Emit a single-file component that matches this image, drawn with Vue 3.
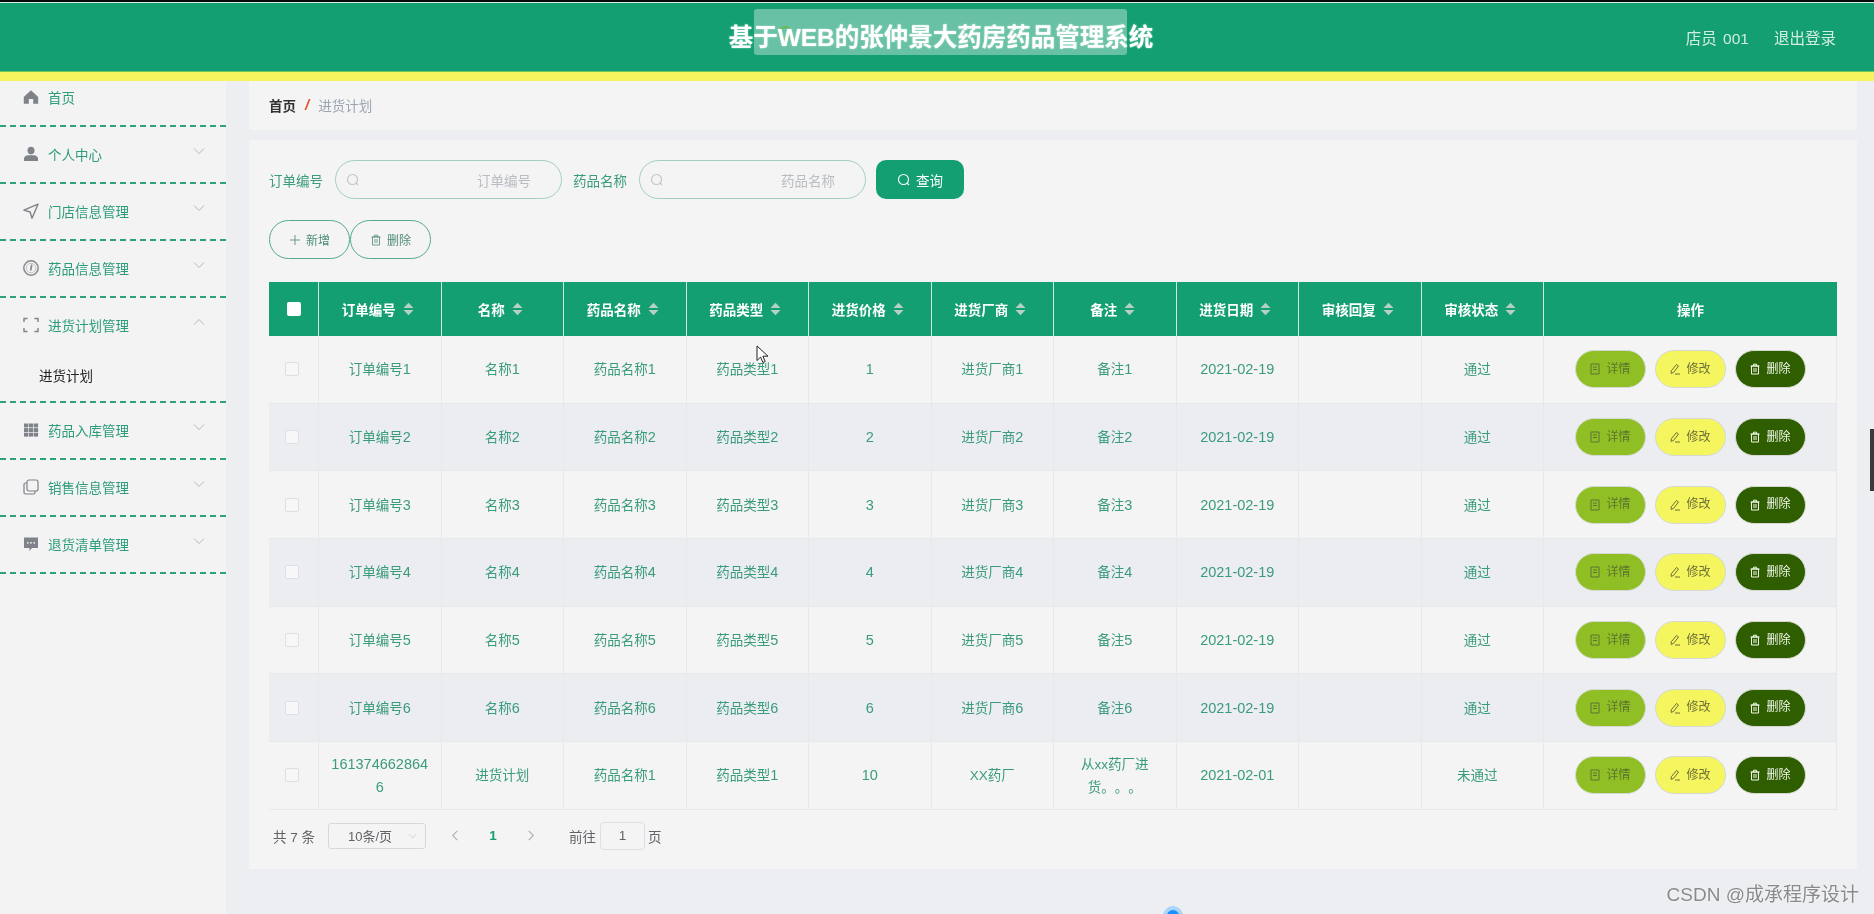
<script setup>
const sideItems = [
  { label: '首页', icon: 'home' },
  { label: '个人中心', icon: 'user', arrow: true },
  { label: '门店信息管理', icon: 'send', arrow: true },
  { label: '药品信息管理', icon: 'gauge', arrow: true },
  { label: '进货计划管理', icon: 'full', arrow: true, open: true, sub: '进货计划' },
  { label: '药品入库管理', icon: 'grid', arrow: true },
  { label: '销售信息管理', icon: 'copy', arrow: true },
  { label: '退货清单管理', icon: 'chat', arrow: true },
]
const columns = ['订单编号', '名称', '药品名称', '药品类型', '进货价格', '进货厂商', '备注', '进货日期', '审核回复', '审核状态']
const rows = [1, 2, 3, 4, 5, 6].map((n) => [
  `订单编号${n}`, `名称${n}`, `药品名称${n}`, `药品类型${n}`, `${n}`, `进货厂商${n}`, `备注${n}`, '2021-02-19', '', '通过',
])
rows.push(['1613746628646', '进货计划', '药品名称1', '药品类型1', '10', 'XX药厂', '从xx药厂进货。。。', '2021-02-01', '', '未通过'])
const split = (v) => {
  const m = v.match(/^(.*?)([0-9-]*)$/)
  return [m[1], m[2]]
}
</script>

<template>
  <div class="page">
    <header class="top">
      <div class="logo-box"><span class="logo-ring"></span></div>
      <h1 class="title">基于WEB的张仲景大药房药品管理系统</h1>
      <div class="user">
        <span class="clerk">店员 001</span>
        <span>退出登录</span>
      </div>
    </header>
    <div class="body">
      <aside class="side">
        <div class="menu">
          <div v-for="item in sideItems" :key="item.label" class="group">
            <div class="item">
              <svg class="ico" viewBox="0 0 16 16">
                <path v-if="item.icon === 'home'" fill="#7f8288" d="M8 1.200.8 8v6.800h5V10h4.400v4.800h5V8z" />
                <g v-else-if="item.icon === 'user'" fill="#7f8288">
                  <ellipse cx="8" cy="4.600" rx="3.500" ry="3.800" />
                  <path d="M1 15v-2.500c0-2 2-3.300 4-3.300h6c2 0 4 1.300 4 3.300V15z" />
                </g>
                <path v-else-if="item.icon === 'send'" fill="none" stroke="#7f8288" stroke-width="1.400" stroke-linejoin="round" d="M15 1.200.9 7.200l6.200 1.800 1.900 6.200z" />
                <g v-else-if="item.icon === 'gauge'" fill="none" stroke="#85888d">
                  <circle cx="8" cy="8" r="7.200" stroke-width="1.500" />
                  <circle cx="8" cy="8" r="4.800" stroke-width=".8" stroke="#b5b5b5" />
                  <path d="M8.800 4.500 7.600 10.500" stroke-width="1.700" />
                </g>
                <path v-else-if="item.icon === 'full'" fill="none" stroke="#7f8288" stroke-width="1.400" d="M1 5V1.500h3.500M11.500 1.500H15V5M15 11v3.500h-3.500M4.500 14.500H1V11" />
                <g v-else-if="item.icon === 'grid'" fill="#7f8288">
                  <rect x="1" y="1.500" width="4.300" height="3.900" /><rect x="5.900" y="1.500" width="4.300" height="3.900" /><rect x="10.800" y="1.500" width="4.300" height="3.900" />
                  <rect x="1" y="6.100" width="4.300" height="3.900" /><rect x="5.900" y="6.100" width="4.300" height="3.900" /><rect x="10.800" y="6.100" width="4.300" height="3.900" />
                  <rect x="1" y="10.700" width="4.300" height="3.900" /><rect x="5.900" y="10.700" width="4.300" height="3.900" /><rect x="10.800" y="10.700" width="4.300" height="3.900" />
                </g>
                <g v-else-if="item.icon === 'copy'" fill="none" stroke="#7f8288" stroke-width="1.200">
                  <rect x="4" y="1" width="11" height="11" rx="2" />
                  <path d="M4 4H2.500A1.500 1.500 0 0 0 1 5.500v8A1.500 1.500 0 0 0 2.500 15h8a1.500 1.500 0 0 0 1.500-1.500V12" />
                </g>
                <g v-else>
                  <path fill="#7f8288" d="M1 1.500h14v10.500H9l-2.500 3v-3H1z" />
                  <circle cx="4.800" cy="6.800" r=".9" fill="#f3f3f4" /><circle cx="8" cy="6.800" r=".9" fill="#f3f3f4" /><circle cx="11.200" cy="6.800" r=".9" fill="#f3f3f4" />
                </g>
              </svg>
              <span class="item-label">{{ item.label }}</span>
              <svg v-if="item.arrow" class="chev" :class="{ up: item.open }" viewBox="0 0 12 8">
                <path d="M1 1.500 6 6.500l5-5" />
              </svg>
            </div>
            <div v-if="item.sub" class="sub">{{ item.sub }}</div>
          </div>
        </div>
      </aside>
      <main class="main">
        <nav class="crumb">
          <b>首页</b>
          <i>/</i>
          <span>进货计划</span>
        </nav>
        <section class="card">
          <div class="search">
            <label>订单编号</label>
            <div class="input">
              <svg class="glass" viewBox="0 0 14 14"><circle cx="6.500" cy="6.500" r="5" /><path d="m10 10 2 2" /></svg>
              <span>订单编号</span>
            </div>
            <label>药品名称</label>
            <div class="input">
              <svg class="glass" viewBox="0 0 14 14"><circle cx="6.500" cy="6.500" r="5" /><path d="m10 10 2 2" /></svg>
              <span>药品名称</span>
            </div>
            <button class="query">
              <svg class="glass white" viewBox="0 0 14 14"><circle cx="6.500" cy="6.500" r="5" /><path d="m10 10 2 2" /></svg>
              查询
            </button>
          </div>
          <div class="tools">
            <button class="ghost">
              <svg viewBox="0 0 12 12"><path d="M6 1v10M1 6h10" /></svg>
              新增
            </button>
            <button class="ghost">
              <svg viewBox="0 0 12 12"><path d="M2.500 3h7v8h-7zM1.500 3h9M4.500 3V1.200h3V3M5 5v4M7 5v4" /></svg>
              删除
            </button>
          </div>
          <div class="table">
            <div class="th"><span class="box head-box"></span></div>
            <div v-for="c in columns" :key="c" class="th sortable">
              <span>{{ c }}</span>
              <svg class="caret" viewBox="0 0 11 14"><path d="M5.500 .8 10.500 6H.5zM5.500 13.200.5 8h10z" /></svg>
            </div>
            <div class="th">操作</div>
            <template v-for="(row, r) in rows" :key="r">
              <div class="td" :class="{ even: r % 2 }"><span class="box"></span></div>
              <div v-for="(v, c) in row" :key="c" class="td" :class="{ even: r % 2, status: c === 9 }">
                <div class="cell"><span>{{ split(v)[0] }}</span><span class="lat">{{ split(v)[1] }}</span></div>
              </div>
              <div class="td acts" :class="{ even: r % 2 }">
                <button class="act detail">
                  <svg viewBox="0 0 12 12"><path d="M2 1h8v10H2zM4 4h4M4 6.500h4" /></svg>详情
                </button>
                <button class="act edit">
                  <svg viewBox="0 0 12 12"><path d="M7.500 1.500 9.500 3 4.500 9.500l-2.500.8.300-2.500zM6 11h5" /></svg>修改
                </button>
                <button class="act del">
                  <svg viewBox="0 0 12 12"><path d="M2.500 3h7v8h-7zM1.500 3h9M4.500 3V1.200h3V3M5 5v4M7 5v4" /></svg>删除
                </button>
              </div>
            </template>
          </div>
          <div class="pager">
            <span class="total">共 7 条</span>
            <div class="size">
              <span>10条/页</span>
              <svg viewBox="0 0 12 8"><path d="M1 1.500 6 6.500l5-5" /></svg>
            </div>
            <svg class="pg prev" viewBox="0 0 8 12"><path d="M6.500 1 1.500 6l5 5" /></svg>
            <b class="current">1</b>
            <svg class="pg next" viewBox="0 0 8 12"><path d="M1.500 1l5 5-5 5" /></svg>
            <span class="goto">前往</span>
            <div class="jump">1</div>
            <span>页</span>
          </div>
        </section>
      </main>
    </div>
    <div class="grip"></div>
    <div class="dot"></div>
    <svg class="cursor" viewBox="0 0 12 19"><path d="M1 1v14.500l3.600-3.400 2.300 5.400 2.300-1-2.300-5.300H12z" /></svg>
    <div class="mark">CSDN @成承程序设计</div>
  </div>
</template>

<style>
html, body { margin: 0; background: #eceef1; overflow: hidden; }
</style>

<style scoped>
.page {
  position: relative;
  width: 1874px;
  height: 914px;
  overflow: hidden;
  background: #eceef1;
  font-family: "Liberation Sans", "Noto Sans CJK SC", sans-serif;
  font-size: 13.5px;
  filter: blur(0.35px);
}
.top {
  position: relative;
  z-index: 2;
  box-sizing: border-box;
  height: 81px;
  display: flex;
  align-items: center;
  justify-content: center;
  padding-top: 2px;
  background: #139f72;
  border-top: 2px solid #0a0a0a;
  border-bottom: 9px solid #f6f45e;
  box-shadow: inset 0 1px 0 #d8efe6, inset 0 -1px 0 #6cc45c;
}
.logo-box {
  position: absolute;
  left: 754px;
  top: 7px;
  width: 373px;
  height: 46px;
  border-radius: 3px;
  background: rgba(255, 255, 255, 0.36);
}
.logo-ring {
  position: absolute;
  left: 24px;
  top: 17px;
  width: 10px;
  height: 10px;
  border: 2px solid rgba(110, 180, 60, 0.75);
  border-radius: 50%;
}
.title {
  position: relative;
  margin: 0 0 0 8px;
  font-size: 24.500px;
  line-height: 36px;
  font-weight: 700;
  color: #fff;
  text-shadow: 0 0 2px rgba(255, 255, 255, 0.6);
}
.user {
  position: absolute;
  right: 38px;
  top: 0;
  height: 70px;
  display: flex;
  align-items: center;
  gap: 25px;
  font-size: 15.500px;
  color: #d3ece2;
}
.clerk { word-spacing: 2px; }
.body { display: flex; height: 833px; }
.side {
  flex: none;
  width: 226px;
  background: #f3f3f4;
}
.menu { margin-top: -11px; }
.group { border-bottom: 2px dashed #2f9f7e; }
.item {
  box-sizing: border-box;
  height: 55px;
  display: flex;
  align-items: center;
  padding: 0 0 1px 23px;
  color: #2c9c7a;
}
.ico { flex: none; width: 16px; height: 16px; margin-right: 9px; }
.item-label { flex: 1; }
.chev { flex: none; width: 12px; height: 8px; margin: -6px 21px 0 0; }
.chev path { fill: none; stroke: #b4b7bb; stroke-width: 1; }
.chev.up { transform: rotate(180deg); }
.sub { height: 48px; line-height: 47px; padding-left: 39px; color: #222; }
.main { flex: 1; padding: 0 17px 0 23px; }
.crumb {
  box-sizing: border-box;
  height: 49px;
  display: flex;
  align-items: center;
  padding: 0 0 2px 20px;
  margin-bottom: 10px;
  background: #f4f4f4;
  border-radius: 0 0 4px 4px;
}
.crumb b { color: #303133; font-weight: 700; }
.crumb i { margin: 0 9px; color: #e2542c; font-weight: 700; font-size: 15px; }
.crumb span { color: #9aa5b1; }
.card { height: 729px; box-sizing: border-box; padding: 20px 20px 0; background: #f4f4f4; }
.search { display: flex; align-items: center; height: 39px; }
.search label { color: #3a9b7d; width: 54px; white-space: nowrap; }
.input {
  box-sizing: border-box;
  width: 227px;
  height: 39px;
  margin: 0 11px 0 12px;
  display: flex;
  align-items: center;
  justify-content: space-between;
  padding: 0 30px 0 10px;
  border: 1px solid #a3cfc0;
  border-radius: 20px;
  color: #b9bcc2;
}
.glass { width: 14px; height: 14px; }
.glass circle, .glass path { fill: none; stroke: #c0c4cc; stroke-width: 1.100; }
.glass.white circle, .glass.white path { stroke: #fff; }
.query {
  width: 88px;
  height: 39px;
  margin-left: -1px;
  padding: 0;
  display: flex;
  align-items: center;
  justify-content: center;
  gap: 5px;
  border: 0;
  border-radius: 10px;
  background: #139f72;
  color: #fff;
  font: inherit;
}
.tools { display: flex; gap: 0; margin: 21px 0 23px; }
.ghost {
  width: 81px;
  height: 39px;
  padding: 0;
  display: flex;
  align-items: center;
  justify-content: center;
  gap: 5px;
  border: 1px solid #55ab90;
  border-radius: 20px;
  background: transparent;
  color: #4f8c77;
  font: inherit;
  font-size: 12px;
}
.ghost svg { width: 12px; height: 12px; }
.ghost svg path { fill: none; stroke: #6a9b8a; stroke-width: 1; }
.table {
  display: grid;
  grid-template-columns: 50px repeat(10, 122.500px) 293px;
  grid-template-rows: 54px repeat(7, 67.700px);
}
.th {
  display: flex;
  align-items: center;
  justify-content: center;
  gap: 7px;
  background: #139f72;
  border-right: 1px solid #cfe9df;
  color: #fff;
  font-weight: 700;
}
.th.sortable { padding-right: 4px; }
.th:nth-child(12) { border-right: 0; }
.caret { width: 11px; height: 14px; }
.caret path { fill: #b5d0c5; }
.td {
  box-sizing: border-box;
  display: flex;
  align-items: center;
  justify-content: center;
  padding: 0 10px;
  text-align: center;
  line-height: 23px;
  color: #3a9b7d;
  background: #f4f4f4;
  border-right: 1px solid #e6e8ec;
  border-bottom: 1px solid #e6e8ec;
  text-spacing-trim: space-all;
}
.td.even { background: #ebedf1; }
.td.status { padding-right: 20px; }
.cell { min-width: 0; margin-top: 1px; overflow-wrap: anywhere; }
.lat { font-size: 14.500px; }
.box {
  box-sizing: border-box;
  width: 14px;
  height: 14px;
  margin-left: -4px;
  border: 1px solid #dcdfe6;
  border-radius: 2px;
  background: #f7f7f7;
}
.head-box { margin-left: 0; border: 0; background: #fff; }
.acts { gap: 9px; padding: 0; }
.act {
  box-sizing: border-box;
  width: 71px;
  height: 38px;
  padding: 0;
  display: flex;
  align-items: center;
  justify-content: center;
  gap: 5px;
  border: 1px solid #d5d9d2;
  border-radius: 19px;
  font: inherit;
  font-size: 12px;
}
.act svg { width: 12px; height: 12px; }
.act svg path { fill: none; stroke: currentColor; stroke-width: 1; }
.detail { background: #8fbf24; color: #5c7430; }
.edit { background: #f5f55f; color: #6d7038; }
.del { background: #2e5e00; color: #f2f6ea; }
.pager {
  display: flex;
  align-items: center;
  height: 28px;
  margin-top: 12px;
  padding-left: 4px;
  font-size: 13.500px;
  color: #606266;
}
.total { width: 55px; }
.size {
  box-sizing: border-box;
  width: 98px;
  height: 26px;
  display: flex;
  align-items: center;
  justify-content: space-between;
  padding: 0 8px 0 19px;
  border: 1px solid #d6d8dc;
  border-radius: 3px;
  font-size: 13px;
}
.size svg { width: 9px; height: 6px; }
.size svg path { fill: none; stroke: #c0c4cc; stroke-width: 1; }
.pg { width: 8px; height: 11px; }
.pg path { fill: none; stroke: #b0b3b8; stroke-width: 1.300; }
.prev { margin-left: 25px; }
.current { width: 68px; text-align: center; color: #139f72; font-weight: 700; }
.goto { margin-left: 34px; margin-right: 4px; }
.jump {
  box-sizing: border-box;
  width: 45px;
  height: 28px;
  margin-right: 3px;
  line-height: 26px;
  text-align: center;
  border: 1px solid #dcdfe6;
  border-radius: 4px;
}
.grip { position: absolute; right: 0; top: 429px; width: 4px; height: 62px; background: #3a3a3a; }
.dot {
  position: absolute;
  left: 1167px;
  top: 910px;
  width: 12px;
  height: 12px;
  border-radius: 50%;
  background: #1a8fff;
  box-shadow: 0 0 0 4px #a9d4fb;
}
.cursor { position: absolute; left: 756px; top: 345px; width: 12px; height: 19px; }
.cursor path { fill: #fff; stroke: #222; stroke-width: 1; }
.mark {
  position: absolute;
  right: 15px;
  top: 884px;
  font-size: 19px;
  line-height: 22px;
  color: #8a8a8a;
  text-shadow: 0 0 2px #fff;
}
</style>
